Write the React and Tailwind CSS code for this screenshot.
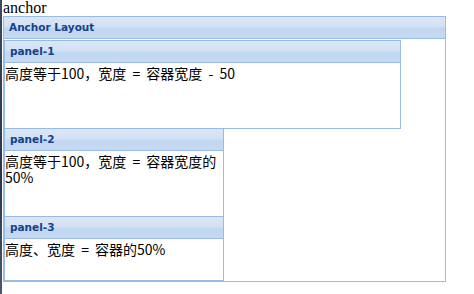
import React from 'react';

const cjk = { fontFamily: '"Noto Sans CJK SC", "Liberation Sans", sans-serif' };

const Header = ({ title }) => (
  <div className="h-[22px] border-b border-[#99bbe8] bg-[linear-gradient(#dbe6f6_0%,#d3e1f5_45%,#c3d6f1_55%,#c7d9f2_100%)] px-[5px] flex items-center">
    <span
      className="text-[10.5px] font-bold text-[#15428b] leading-none"
      style={{ fontFamily: '"DejaVu Sans", Verdana, sans-serif' }}
    >
      {title}
    </span>
  </div>
);

const Panel = ({ title, className, children }) => (
  <div className={`border border-[#99bbe8] bg-white flex flex-col ${className}`}>
    <Header title={title} />
    <div className="flex-1 text-[14px] leading-[16px] text-black pt-[2px] [word-spacing:3px]" style={cjk}>
      {children}
    </div>
  </div>
);

export default function App() {
  return (
    <div className="w-[474px] h-[294px] bg-white flex overflow-hidden">
      <div className="w-[2px] h-full bg-[linear-gradient(#3c4a5e,#2a3648_60%,#4a586c)]" />
      <div className="flex-1 flex flex-col">
        <div
          className="h-[16px] text-[16px] leading-[15px] text-black pl-[1px]"
          style={{ fontFamily: '"Liberation Serif", serif' }}
        >
          anchor
        </div>
        <div className="ml-[1px] w-[443px] h-[266px] border border-[#99bbe8] flex flex-col">
          <Header title="Anchor Layout" />
          <div className="flex-1 flex flex-col pt-[1px]">
            <Panel title="panel-1" className="w-[397px] h-[89px]">
              高度等于100，宽度 = 容器宽度 - 50
            </Panel>
            <Panel title="panel-2" className="w-[220px] h-[89px] -mt-[1px]">
              高度等于100，宽度 = 容器宽度的50%
            </Panel>
            <Panel title="panel-3" className="w-[220px] flex-1 -mt-[1px]">
              高度、宽度 = 容器的50%
            </Panel>
          </div>
        </div>
      </div>
    </div>
  );
}
